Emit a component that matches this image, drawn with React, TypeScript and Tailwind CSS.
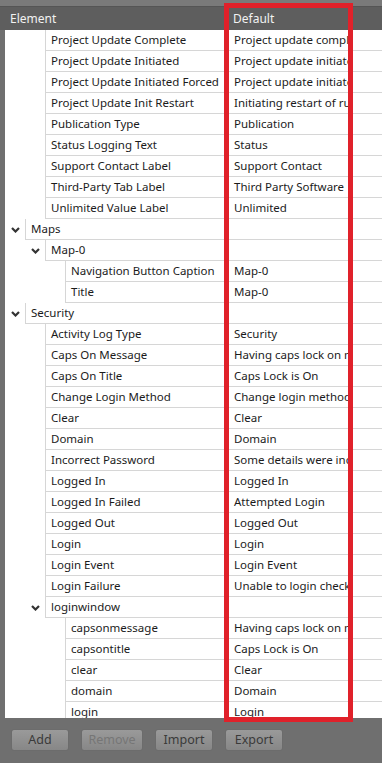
import React from 'react';

type Row = { label: string; value?: string; level: number; group?: boolean };

const rows: Row[] = [
  { label: 'Project Update Complete', value: 'Project update complete', level: 1 },
  { label: 'Project Update Initiated', value: 'Project update initiated', level: 1 },
  { label: 'Project Update Initiated Forced', value: 'Project update initiated', level: 1 },
  { label: 'Project Update Init Restart', value: 'Initiating restart of run', level: 1 },
  { label: 'Publication Type', value: 'Publication', level: 1 },
  { label: 'Status Logging Text', value: 'Status', level: 1 },
  { label: 'Support Contact Label', value: 'Support Contact', level: 1 },
  { label: 'Third-Party Tab Label', value: 'Third Party Software', level: 1 },
  { label: 'Unlimited Value Label', value: 'Unlimited', level: 1 },
  { label: 'Maps', level: 0, group: true },
  { label: 'Map-0', level: 1, group: true },
  { label: 'Navigation Button Caption', value: 'Map-0', level: 2 },
  { label: 'Title', value: 'Map-0', level: 2 },
  { label: 'Security', level: 0, group: true },
  { label: 'Activity Log Type', value: 'Security', level: 1 },
  { label: 'Caps On Message', value: 'Having caps lock on may', level: 1 },
  { label: 'Caps On Title', value: 'Caps Lock is On', level: 1 },
  { label: 'Change Login Method', value: 'Change login method', level: 1 },
  { label: 'Clear', value: 'Clear', level: 1 },
  { label: 'Domain', value: 'Domain', level: 1 },
  { label: 'Incorrect Password', value: 'Some details were incorrect', level: 1 },
  { label: 'Logged In', value: 'Logged In', level: 1 },
  { label: 'Logged In Failed', value: 'Attempted Login', level: 1 },
  { label: 'Logged Out', value: 'Logged Out', level: 1 },
  { label: 'Login', value: 'Login', level: 1 },
  { label: 'Login Event', value: 'Login Event', level: 1 },
  { label: 'Login Failure', value: 'Unable to login check', level: 1 },
  { label: 'loginwindow', level: 1, group: true },
  { label: 'capsonmessage', value: 'Having caps lock on may', level: 2 },
  { label: 'capsontitle', value: 'Caps Lock is On', level: 2 },
  { label: 'clear', value: 'Clear', level: 2 },
  { label: 'domain', value: 'Domain', level: 2 },
  { label: 'login', value: 'Login', level: 2 },
];

const indent = ['w-[20px]', 'w-[40px]', 'w-[60px]'];

const Chevron = () => (
  <svg width="9" height="6" viewBox="0 0 9 6" className="text-[#333333]">
    <polyline points="1,1 4.5,4.5 8,1" fill="none" stroke="currentColor" strokeWidth="2.2" />
  </svg>
);

const TreeRow = ({ row }: { row: Row }) => (
  <div className="flex h-[21px] shrink-0">
    <div className={`${indent[row.level]} shrink-0 flex justify-end`}>
      <div className="w-[20px] flex items-center justify-center pt-[1px]">{row.group && <Chevron />}</div>
    </div>
    <div className="flex-1 min-w-0 border-l border-b border-[#d6d6d6] pl-[5px] flex items-center whitespace-nowrap overflow-hidden">
      {row.label}
    </div>
    <div className="w-[154px] shrink-0 border-l border-b border-[#d6d6d6] flex items-center">
      <div className="w-[120px] pl-[5px] overflow-hidden whitespace-nowrap">{row.value ?? ''}</div>
    </div>
  </div>
);

const Button = ({ label, disabled, width }: { label: string; disabled?: boolean; width: string }) => (
  <button
    className={`h-[22px] rounded-[3px] border border-[#6c6c6c] bg-gradient-to-b from-[#9a9a9a] to-[#878787] text-[12.5px] ${
      disabled ? 'text-[#767676]' : 'text-[#3a3a3a]'
    } ${width} flex items-center justify-center`}
  >
    {label}
  </button>
);

export default function App() {
  return (
    <div
      className="relative w-[382px] h-[763px] bg-[#6f6f6f] flex flex-col overflow-hidden text-[11.5px] text-[#1b1b1b]"
      style={{ fontFamily: '"Noto Sans", "Open Sans", sans-serif' }}
    >
      <div className="h-[7px] bg-[#7a7a7a] border-b border-[#555555] shrink-0" />
      <div className="h-[23px] bg-[#5e5e5e] flex items-center text-[#f2f2f2] text-[12px] shrink-0">
        <div className="w-[228px] pl-[10px]">Element</div>
        <div className="pl-[5px]">Default</div>
      </div>
      <div className="h-[688px] flex shrink-0 overflow-hidden">
        <div className="w-[5px] bg-[#707070] shrink-0" />
        <div className="flex-1 bg-white flex flex-col overflow-hidden">
          {rows.map((r, i) => (
            <TreeRow key={i} row={r} />
          ))}
        </div>
      </div>
      <div className="flex gap-[12px] pl-[11px] pt-[11px]">
        <Button label="Add" width="w-[58px]" />
        <Button label="Remove" width="w-[62px]" disabled />
        <Button label="Import" width="w-[58px]" />
        <Button label="Export" width="w-[58px]" />
      </div>
      <div className="absolute left-[224px] top-[3px] w-[129px] h-[719px] border-[5px] border-[#e0212a]" />
    </div>
  );
}
